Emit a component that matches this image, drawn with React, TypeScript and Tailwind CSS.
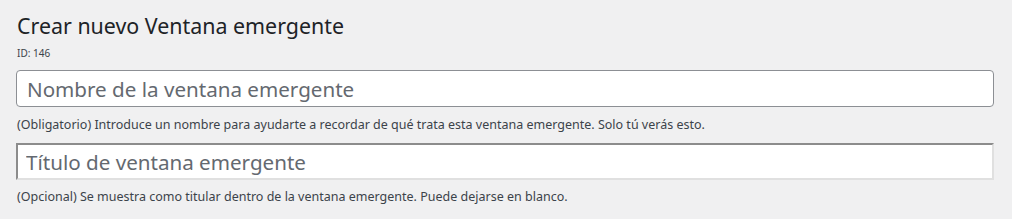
export default function App() {
  return (
    <div className="min-h-[219px] w-full bg-[#f0f0f1] px-4 pt-[11px] font-['Noto_Sans',sans-serif] text-[#1d2327]">
      <h1 className="pl-px text-[21.4px] leading-[29px] font-normal">Crear nuevo Ventana emergente</h1>
      <div className="mt-[6px] pl-px text-[10px] leading-[14px] text-[#3c434a]">ID: 146</div>

      <input
        type="text"
        placeholder="Nombre de la ventana emergente"
        className="mt-[10px] block h-[37px] w-[978px] rounded-[4px] border border-[#8c8f94] bg-white px-[10px] text-[20.6px] placeholder:text-[#646970] outline-none"
      />
      <p className="mt-[9px] pl-px text-[12.5px] leading-[17px] text-[#3c434a]">
        (Obligatorio) Introduce un nombre para ayudarte a recordar de qué trata esta ventana emergente. Solo tú verás esto.
      </p>

      <input
        type="text"
        placeholder="Título de ventana emergente"
        className="mt-[10px] block h-[37px] w-[978px] border-2 border-t-[#8c8c8c] border-l-[#8c8c8c] border-r-[#e0e0e0] border-b-[#e0e0e0] bg-white px-[8px] text-[20.6px] placeholder:text-[#646970] outline-none"
      />
      <p className="mt-[8px] pl-px text-[12.5px] leading-[17px] text-[#3c434a]">
        (Opcional) Se muestra como titular dentro de la ventana emergente. Puede dejarse en blanco.
      </p>
    </div>
  );
}
